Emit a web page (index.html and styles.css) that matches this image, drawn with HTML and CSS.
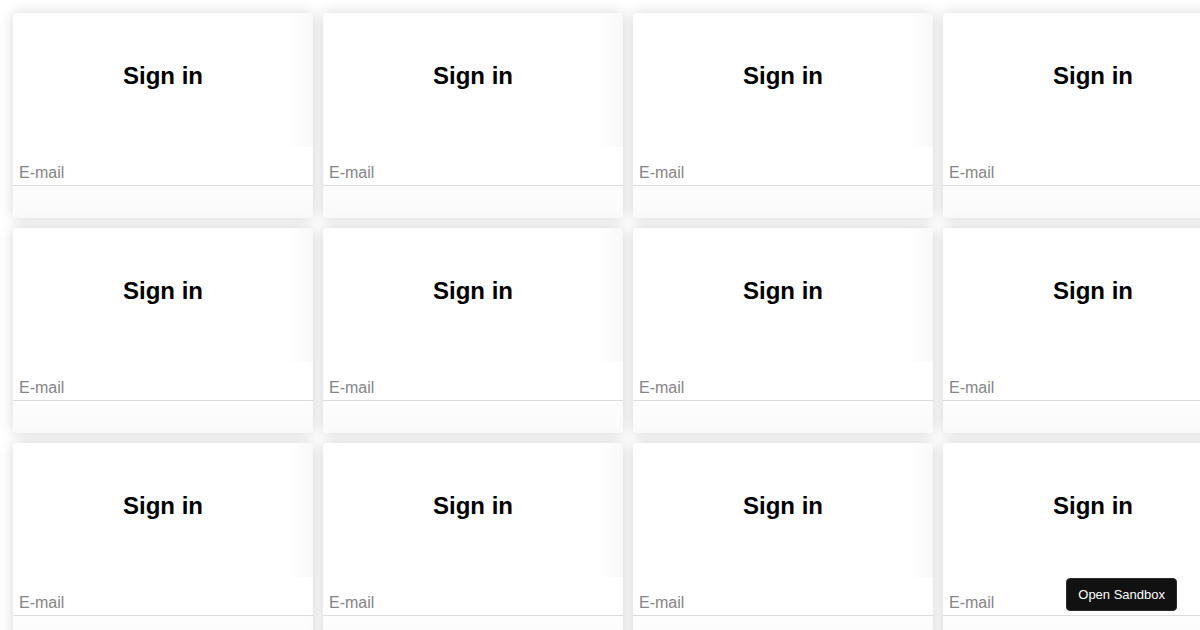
FILE: index.html
```html
<!DOCTYPE html>
<html lang="en">
<head>
<meta charset="utf-8">
<title>Sign in</title>
<link rel="stylesheet" href="styles.css">
</head>
<body>
<main class="grid">
  <div class="card"><div class="card-head"><h2 class="title">Sign in</h2></div><input class="field" type="email" placeholder="E-mail"><div class="card-foot"></div></div>
  <div class="card"><div class="card-head"><h2 class="title">Sign in</h2></div><input class="field" type="email" placeholder="E-mail"><div class="card-foot"></div></div>
  <div class="card"><div class="card-head"><h2 class="title">Sign in</h2></div><input class="field" type="email" placeholder="E-mail"><div class="card-foot"></div></div>
  <div class="card"><div class="card-head"><h2 class="title">Sign in</h2></div><input class="field" type="email" placeholder="E-mail"><div class="card-foot"></div></div>
  <div class="card"><div class="card-head"><h2 class="title">Sign in</h2></div><input class="field" type="email" placeholder="E-mail"><div class="card-foot"></div></div>
  <div class="card"><div class="card-head"><h2 class="title">Sign in</h2></div><input class="field" type="email" placeholder="E-mail"><div class="card-foot"></div></div>
  <div class="card"><div class="card-head"><h2 class="title">Sign in</h2></div><input class="field" type="email" placeholder="E-mail"><div class="card-foot"></div></div>
  <div class="card"><div class="card-head"><h2 class="title">Sign in</h2></div><input class="field" type="email" placeholder="E-mail"><div class="card-foot"></div></div>
  <div class="card"><div class="card-head"><h2 class="title">Sign in</h2></div><input class="field" type="email" placeholder="E-mail"><div class="card-foot"></div></div>
  <div class="card"><div class="card-head"><h2 class="title">Sign in</h2></div><input class="field" type="email" placeholder="E-mail"><div class="card-foot"></div></div>
  <div class="card"><div class="card-head"><h2 class="title">Sign in</h2></div><input class="field" type="email" placeholder="E-mail"><div class="card-foot"></div></div>
  <div class="card"><div class="card-head"><h2 class="title">Sign in</h2></div><input class="field" type="email" placeholder="E-mail"><div class="card-foot"></div></div>
</main>
<button class="sandbox-btn" type="button">Open Sandbox</button>
</body>
</html>
```
FILE: styles.css
```css
html, body {
  margin: 0;
  padding: 0;
  height: 100%;
  overflow: hidden;
  background: #ffffff;
  font-family: "Liberation Sans", Arial, sans-serif;
}

.grid {
  display: grid;
  grid-template-columns: repeat(4, 300px);
  grid-auto-rows: 205px;
  gap: 10px;
  padding: 13px;
  width: max-content;
}

.card {
  display: flex;
  flex-direction: column;
  background: #ffffff;
  border-radius: 4px;
  box-shadow: 0 0 14px rgba(0, 0, 0, 0.16);
  overflow: hidden;
}

.card-head {
  height: 134px;
  display: flex;
  align-items: center;
  justify-content: center;
  background: linear-gradient(to right, #ffffff 0%, #ffffff 91%, #f9f9f9 100%);
}

.title {
  margin: 0;
  font-size: 24px;
  font-weight: 700;
  color: #000000;
  line-height: 1;
  transform: translateY(-4px);
}

.field {
  display: block;
  box-sizing: border-box;
  width: 100%;
  height: 39px;
  margin: 0;
  padding: 14px 6px 0;
  border: 0;
  border-bottom: 1px solid #dcdcdc;
  background: #ffffff;
  font-family: "Liberation Sans", Arial, sans-serif;
  font-size: 16px;
  color: #222;
  outline: none;
}

.field::placeholder {
  color: #858585;
  opacity: 1;
}

.card-foot {
  flex: 1;
  background: linear-gradient(to bottom, #fdfdfd, #fafafa);
}

.sandbox-btn {
  position: fixed;
  right: 23px;
  bottom: 19px;
  height: 33px;
  padding: 0 11px;
  border: 1px solid #2a2a2a;
  border-radius: 4px;
  background: #111111;
  color: #ffffff;
  font-family: "Liberation Sans", Arial, sans-serif;
  font-size: 13px;
  cursor: pointer;
}
```
